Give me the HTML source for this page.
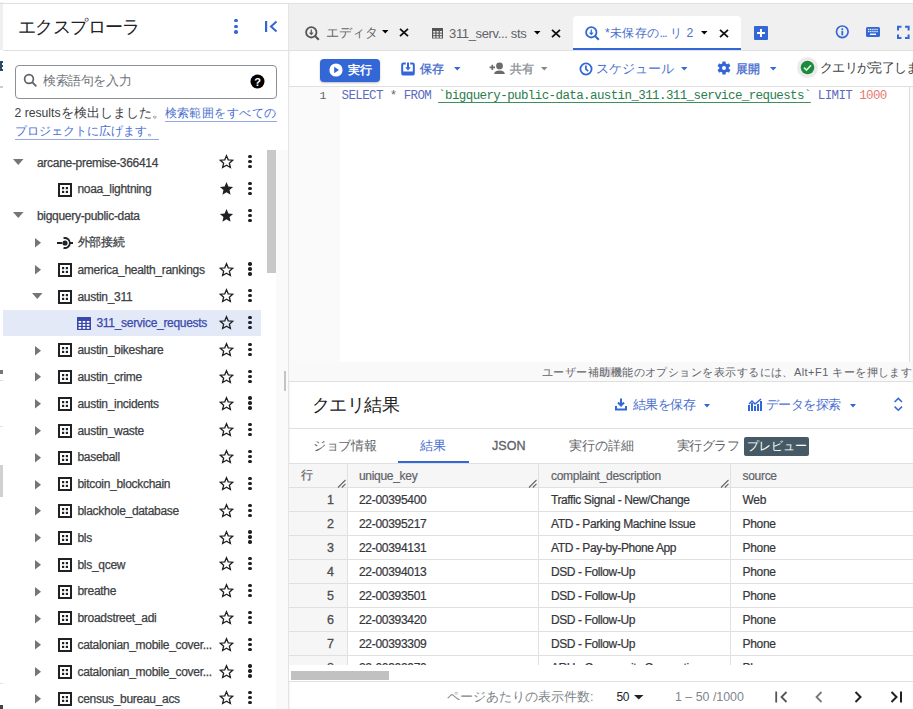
<!DOCTYPE html>
<html lang="ja"><head><meta charset="utf-8"><title>BigQuery</title>
<style>
html,body{margin:0;padding:0;width:913px;height:709px;overflow:hidden;background:#fff;font-family:'Liberation Sans', sans-serif;position:relative}
</style></head><body>
<div style="position:absolute;left:0px;top:2px;width:3px;height:48px;background:#efefef"></div>
<div style="position:absolute;left:0px;top:3px;width:913px;height:1px;background:#e0e0e0"></div>
<div style="position:absolute;left:18px;top:16.30px;line-height:23px;font-size:18px;color:#202124;font-weight:400;letter-spacing:-0.6px;font-family:'Liberation Sans', sans-serif;white-space:nowrap;">エクスプローラ</div>
<div style="position:absolute;left:234px;top:18.75px;width:3.5px;height:3.5px;background:#3367d6;border-radius:50%"></div>
<div style="position:absolute;left:234px;top:24.55px;width:3.5px;height:3.5px;background:#3367d6;border-radius:50%"></div>
<div style="position:absolute;left:234px;top:30.35px;width:3.5px;height:3.5px;background:#3367d6;border-radius:50%"></div>
<svg style="position:absolute;left:263px;top:19px;" width="16" height="15" viewBox="0 0 16 15"><rect x="2" y="2" width="2.2" height="11" fill="#3367d6"/><path d="M13.5 2.5 L8 7.5 L13.5 12.5" stroke="#3367d6" stroke-width="2" fill="none"/></svg>
<div style="position:absolute;left:3px;top:50px;width:285px;height:1px;background:#e0e0e0"></div>
<div style="position:absolute;left:0px;top:61px;width:3px;height:2px;background:#2a4a66"></div>
<div style="position:absolute;left:0px;top:65px;width:3px;height:2px;background:#2a4a66"></div>
<div style="position:absolute;left:0px;top:69px;width:3px;height:2px;background:#2a4a66"></div>
<div style="position:absolute;left:0px;top:61px;width:1.5px;height:10px;background:#2a4a66"></div>
<div style="position:absolute;left:0px;top:85.5px;width:3px;height:2.5px;background:#cdcdcd"></div>
<div style="position:absolute;left:0px;top:370px;width:2.5px;height:3.5px;background:#777"></div>
<div style="position:absolute;left:0px;top:380px;width:3px;height:1px;background:#ddd"></div>
<div style="position:absolute;left:0px;top:426px;width:3px;height:1px;background:#e3e3e3"></div>
<div style="position:absolute;left:0px;top:464.5px;width:3px;height:32.5px;background:#d0d0d0"></div>
<div style="position:absolute;left:0px;top:683px;width:3px;height:1px;background:#e3e3e3"></div>
<div style="position:absolute;left:0px;top:705px;width:3px;height:4px;background:#3b4a3b"></div>
<div style="position:absolute;left:14.5px;top:65px;width:262px;height:33.5px;box-sizing:border-box;border:1px solid #8c9095;border-radius:4px"></div>
<svg style="position:absolute;left:23px;top:73px;" width="15" height="15" viewBox="0 0 15 15"><circle cx="6" cy="6" r="4.4" stroke="#5f6368" stroke-width="1.7" fill="none"/><path d="M9.2 9.2 L13.3 13.3" stroke="#5f6368" stroke-width="1.9"/></svg>
<div style="position:absolute;left:43px;top:71.90px;line-height:17px;font-size:13px;color:#70757a;font-weight:400;letter-spacing:-0.4px;font-family:'Liberation Sans', sans-serif;white-space:nowrap;">検索語句を入力</div>
<svg style="position:absolute;left:250px;top:74px;" width="15" height="15" viewBox="0 0 15 15"><circle cx="7.5" cy="7.5" r="7" fill="#000"/><text x="7.5" y="11.5" font-size="11" font-weight="700" text-anchor="middle" fill="#fff" font-family="Liberation Sans">?</text></svg>
<div style="position:absolute;left:14.5px;top:105.00px;line-height:16px;font-size:12.2px;color:#3c4043;font-weight:400;letter-spacing:0px;font-family:'Liberation Sans', sans-serif;white-space:nowrap;">2 results<span style="font-size:13.2px">を検出しました。</span></div>
<div style="position:absolute;left:164.5px;top:105.00px;line-height:16px;font-size:12.4px;color:#4a6fd0;font-weight:400;letter-spacing:0.45px;font-family:'Liberation Sans', sans-serif;white-space:nowrap;"><span style="border-bottom:1px solid #93a9e3;padding-bottom:1px">検索範囲をすべての</span></div>
<div style="position:absolute;left:14.5px;top:123.00px;line-height:16px;font-size:12.4px;color:#4a6fd0;font-weight:400;letter-spacing:0px;font-family:'Liberation Sans', sans-serif;white-space:nowrap;"><span style="border-bottom:1px solid #93a9e3;padding-bottom:1px">プロジェクトに広げます。</span></div>
<div style="position:absolute;left:3px;top:309.8px;width:258px;height:26.7px;background:#e4e9f8"></div>
<svg style="position:absolute;left:13px;top:158.8px;" width="11" height="7" viewBox="0 0 11 7"><path d="M0 0 L10.5 0 L5.25 6 Z" fill="#757575"/></svg>
<div style="position:absolute;left:37.0px;top:154.50px;line-height:16px;font-size:12px;color:#3c4043;font-weight:400;letter-spacing:-0.3px;font-family:'Liberation Sans', sans-serif;white-space:nowrap;-webkit-text-stroke:0.25px #3c4043">arcane-premise-366414</div>
<svg style="position:absolute;left:218.5px;top:154.3px;" width="15" height="15" viewBox="0 0 15 15"><path transform="translate(7.5 7.6) scale(0.92) translate(-8 -8)" d="M8 1.6 L9.9 6.1 L14.7 6.5 L11.1 9.7 L12.2 14.4 L8 11.9 L3.8 14.4 L4.9 9.7 L1.3 6.5 L6.1 6.1 Z" stroke="#202124" stroke-width="1.4" fill="none" stroke-linejoin="miter"/></svg>
<div style="position:absolute;left:248.3px;top:155.10000000000002px;width:3.4px;height:3.4px;background:#202124;border-radius:50%"></div>
<div style="position:absolute;left:248.3px;top:160.10000000000002px;width:3.4px;height:3.4px;background:#202124;border-radius:50%"></div>
<div style="position:absolute;left:248.3px;top:165.10000000000002px;width:3.4px;height:3.4px;background:#202124;border-radius:50%"></div>
<svg style="position:absolute;left:58px;top:182.60000000000002px;" width="14" height="14" viewBox="0 0 14 14"><rect x="1" y="1" width="12" height="12" stroke="#202124" stroke-width="2" fill="none"/><rect x="4" y="4" width="2.2" height="2.2" fill="#202124"/><rect x="7.8" y="4" width="2.2" height="2.2" fill="#202124"/><rect x="4" y="7.8" width="2.2" height="2.2" fill="#202124"/><rect x="7.8" y="7.8" width="2.2" height="2.2" fill="#202124"/></svg>
<div style="position:absolute;left:77.5px;top:181.30px;line-height:16px;font-size:12px;color:#3c4043;font-weight:400;letter-spacing:-0.3px;font-family:'Liberation Sans', sans-serif;white-space:nowrap;-webkit-text-stroke:0.25px #3c4043">noaa_lightning</div>
<svg style="position:absolute;left:218.5px;top:181.10000000000002px;" width="15" height="15" viewBox="0 0 15 15"><path transform="translate(7.5 7.6) scale(0.9) translate(-8 -8)" d="M8 0.8 L10.1 5.6 L15.3 6.1 L11.4 9.6 L12.5 14.7 L8 12.1 L3.5 14.7 L4.6 9.6 L0.7 6.1 L5.9 5.6 Z" fill="#202124"/></svg>
<div style="position:absolute;left:248.3px;top:181.90000000000003px;width:3.4px;height:3.4px;background:#202124;border-radius:50%"></div>
<div style="position:absolute;left:248.3px;top:186.90000000000003px;width:3.4px;height:3.4px;background:#202124;border-radius:50%"></div>
<div style="position:absolute;left:248.3px;top:191.90000000000003px;width:3.4px;height:3.4px;background:#202124;border-radius:50%"></div>
<svg style="position:absolute;left:13px;top:212.4px;" width="11" height="7" viewBox="0 0 11 7"><path d="M0 0 L10.5 0 L5.25 6 Z" fill="#757575"/></svg>
<div style="position:absolute;left:37.0px;top:208.10px;line-height:16px;font-size:12px;color:#3c4043;font-weight:400;letter-spacing:-0.3px;font-family:'Liberation Sans', sans-serif;white-space:nowrap;-webkit-text-stroke:0.25px #3c4043">bigquery-public-data</div>
<svg style="position:absolute;left:218.5px;top:207.9px;" width="15" height="15" viewBox="0 0 15 15"><path transform="translate(7.5 7.6) scale(0.9) translate(-8 -8)" d="M8 0.8 L10.1 5.6 L15.3 6.1 L11.4 9.6 L12.5 14.7 L8 12.1 L3.5 14.7 L4.6 9.6 L0.7 6.1 L5.9 5.6 Z" fill="#202124"/></svg>
<div style="position:absolute;left:248.3px;top:208.70000000000002px;width:3.4px;height:3.4px;background:#202124;border-radius:50%"></div>
<div style="position:absolute;left:248.3px;top:213.70000000000002px;width:3.4px;height:3.4px;background:#202124;border-radius:50%"></div>
<div style="position:absolute;left:248.3px;top:218.70000000000002px;width:3.4px;height:3.4px;background:#202124;border-radius:50%"></div>
<svg style="position:absolute;left:35px;top:238.45000000000002px;" width="7" height="10" viewBox="0 0 7 10"><path d="M0 0 L6 4.75 L0 9.5 Z" fill="#757575"/></svg>
<svg style="position:absolute;left:57px;top:237.20000000000002px;" width="16" height="12" viewBox="0 0 16 12"><path d="M0 6 H5" stroke="#202124" stroke-width="2"/><circle cx="8" cy="6" r="2.6" fill="#202124"/><path d="M6.5 1.2 A5 5 0 1 1 6.5 10.8" stroke="#202124" stroke-width="1.8" fill="none"/><path d="M13 6 H16" stroke="#202124" stroke-width="2"/></svg>
<div style="position:absolute;left:77.5px;top:233.90px;line-height:16px;font-size:12px;color:#3c4043;font-weight:400;letter-spacing:-0.3px;font-family:'Liberation Sans', sans-serif;white-space:nowrap;-webkit-text-stroke:0.25px #3c4043">外部接続</div>
<svg style="position:absolute;left:35px;top:265.25px;" width="7" height="10" viewBox="0 0 7 10"><path d="M0 0 L6 4.75 L0 9.5 Z" fill="#757575"/></svg>
<svg style="position:absolute;left:58px;top:263.0px;" width="14" height="14" viewBox="0 0 14 14"><rect x="1" y="1" width="12" height="12" stroke="#202124" stroke-width="2" fill="none"/><rect x="4" y="4" width="2.2" height="2.2" fill="#202124"/><rect x="7.8" y="4" width="2.2" height="2.2" fill="#202124"/><rect x="4" y="7.8" width="2.2" height="2.2" fill="#202124"/><rect x="7.8" y="7.8" width="2.2" height="2.2" fill="#202124"/></svg>
<div style="position:absolute;left:77.5px;top:261.70px;line-height:16px;font-size:12px;color:#3c4043;font-weight:400;letter-spacing:-0.3px;font-family:'Liberation Sans', sans-serif;white-space:nowrap;-webkit-text-stroke:0.25px #3c4043">america_health_rankings</div>
<svg style="position:absolute;left:218.5px;top:261.5px;" width="15" height="15" viewBox="0 0 15 15"><path transform="translate(7.5 7.6) scale(0.92) translate(-8 -8)" d="M8 1.6 L9.9 6.1 L14.7 6.5 L11.1 9.7 L12.2 14.4 L8 11.9 L3.8 14.4 L4.9 9.7 L1.3 6.5 L6.1 6.1 Z" stroke="#202124" stroke-width="1.4" fill="none" stroke-linejoin="miter"/></svg>
<div style="position:absolute;left:248.3px;top:262.3px;width:3.4px;height:3.4px;background:#202124;border-radius:50%"></div>
<div style="position:absolute;left:248.3px;top:267.3px;width:3.4px;height:3.4px;background:#202124;border-radius:50%"></div>
<div style="position:absolute;left:248.3px;top:272.3px;width:3.4px;height:3.4px;background:#202124;border-radius:50%"></div>
<svg style="position:absolute;left:32px;top:292.8px;" width="11" height="7" viewBox="0 0 11 7"><path d="M0 0 L10.5 0 L5.25 6 Z" fill="#757575"/></svg>
<svg style="position:absolute;left:58px;top:289.8px;" width="14" height="14" viewBox="0 0 14 14"><rect x="1" y="1" width="12" height="12" stroke="#202124" stroke-width="2" fill="none"/><rect x="4" y="4" width="2.2" height="2.2" fill="#202124"/><rect x="7.8" y="4" width="2.2" height="2.2" fill="#202124"/><rect x="4" y="7.8" width="2.2" height="2.2" fill="#202124"/><rect x="7.8" y="7.8" width="2.2" height="2.2" fill="#202124"/></svg>
<div style="position:absolute;left:77.5px;top:288.50px;line-height:16px;font-size:12px;color:#3c4043;font-weight:400;letter-spacing:-0.3px;font-family:'Liberation Sans', sans-serif;white-space:nowrap;-webkit-text-stroke:0.25px #3c4043">austin_311</div>
<svg style="position:absolute;left:218.5px;top:288.3px;" width="15" height="15" viewBox="0 0 15 15"><path transform="translate(7.5 7.6) scale(0.92) translate(-8 -8)" d="M8 1.6 L9.9 6.1 L14.7 6.5 L11.1 9.7 L12.2 14.4 L8 11.9 L3.8 14.4 L4.9 9.7 L1.3 6.5 L6.1 6.1 Z" stroke="#202124" stroke-width="1.4" fill="none" stroke-linejoin="miter"/></svg>
<div style="position:absolute;left:248.3px;top:289.1px;width:3.4px;height:3.4px;background:#202124;border-radius:50%"></div>
<div style="position:absolute;left:248.3px;top:294.1px;width:3.4px;height:3.4px;background:#202124;border-radius:50%"></div>
<div style="position:absolute;left:248.3px;top:299.1px;width:3.4px;height:3.4px;background:#202124;border-radius:50%"></div>
<svg style="position:absolute;left:77px;top:316.6px;" width="14" height="13" viewBox="0 0 14 13"><rect x="0" y="0" width="14" height="13" fill="#3949ab"/><rect x="1.6" y="4.0" width="2.6" height="1.8" fill="#fff"/><rect x="1.6" y="7.0" width="2.6" height="1.8" fill="#fff"/><rect x="1.6" y="10.0" width="2.6" height="1.8" fill="#fff"/><rect x="5.7" y="4.0" width="2.6" height="1.8" fill="#fff"/><rect x="5.7" y="7.0" width="2.6" height="1.8" fill="#fff"/><rect x="5.7" y="10.0" width="2.6" height="1.8" fill="#fff"/><rect x="9.8" y="4.0" width="2.6" height="1.8" fill="#fff"/><rect x="9.8" y="7.0" width="2.6" height="1.8" fill="#fff"/><rect x="9.8" y="10.0" width="2.6" height="1.8" fill="#fff"/></svg>
<div style="position:absolute;left:96.5px;top:315.30px;line-height:16px;font-size:12px;color:#3949ab;font-weight:400;letter-spacing:-0.3px;font-family:'Liberation Sans', sans-serif;white-space:nowrap;-webkit-text-stroke:0.25px #3949ab">311_service_requests</div>
<svg style="position:absolute;left:218.5px;top:315.1px;" width="15" height="15" viewBox="0 0 15 15"><path transform="translate(7.5 7.6) scale(0.92) translate(-8 -8)" d="M8 1.6 L9.9 6.1 L14.7 6.5 L11.1 9.7 L12.2 14.4 L8 11.9 L3.8 14.4 L4.9 9.7 L1.3 6.5 L6.1 6.1 Z" stroke="#202124" stroke-width="1.4" fill="none" stroke-linejoin="miter"/></svg>
<div style="position:absolute;left:248.3px;top:315.90000000000003px;width:3.4px;height:3.4px;background:#202124;border-radius:50%"></div>
<div style="position:absolute;left:248.3px;top:320.90000000000003px;width:3.4px;height:3.4px;background:#202124;border-radius:50%"></div>
<div style="position:absolute;left:248.3px;top:325.90000000000003px;width:3.4px;height:3.4px;background:#202124;border-radius:50%"></div>
<svg style="position:absolute;left:35px;top:345.65px;" width="7" height="10" viewBox="0 0 7 10"><path d="M0 0 L6 4.75 L0 9.5 Z" fill="#757575"/></svg>
<svg style="position:absolute;left:58px;top:343.4px;" width="14" height="14" viewBox="0 0 14 14"><rect x="1" y="1" width="12" height="12" stroke="#202124" stroke-width="2" fill="none"/><rect x="4" y="4" width="2.2" height="2.2" fill="#202124"/><rect x="7.8" y="4" width="2.2" height="2.2" fill="#202124"/><rect x="4" y="7.8" width="2.2" height="2.2" fill="#202124"/><rect x="7.8" y="7.8" width="2.2" height="2.2" fill="#202124"/></svg>
<div style="position:absolute;left:77.5px;top:342.10px;line-height:16px;font-size:12px;color:#3c4043;font-weight:400;letter-spacing:-0.3px;font-family:'Liberation Sans', sans-serif;white-space:nowrap;-webkit-text-stroke:0.25px #3c4043">austin_bikeshare</div>
<svg style="position:absolute;left:218.5px;top:341.9px;" width="15" height="15" viewBox="0 0 15 15"><path transform="translate(7.5 7.6) scale(0.92) translate(-8 -8)" d="M8 1.6 L9.9 6.1 L14.7 6.5 L11.1 9.7 L12.2 14.4 L8 11.9 L3.8 14.4 L4.9 9.7 L1.3 6.5 L6.1 6.1 Z" stroke="#202124" stroke-width="1.4" fill="none" stroke-linejoin="miter"/></svg>
<div style="position:absolute;left:248.3px;top:342.7px;width:3.4px;height:3.4px;background:#202124;border-radius:50%"></div>
<div style="position:absolute;left:248.3px;top:347.7px;width:3.4px;height:3.4px;background:#202124;border-radius:50%"></div>
<div style="position:absolute;left:248.3px;top:352.7px;width:3.4px;height:3.4px;background:#202124;border-radius:50%"></div>
<svg style="position:absolute;left:35px;top:372.45000000000005px;" width="7" height="10" viewBox="0 0 7 10"><path d="M0 0 L6 4.75 L0 9.5 Z" fill="#757575"/></svg>
<svg style="position:absolute;left:58px;top:370.20000000000005px;" width="14" height="14" viewBox="0 0 14 14"><rect x="1" y="1" width="12" height="12" stroke="#202124" stroke-width="2" fill="none"/><rect x="4" y="4" width="2.2" height="2.2" fill="#202124"/><rect x="7.8" y="4" width="2.2" height="2.2" fill="#202124"/><rect x="4" y="7.8" width="2.2" height="2.2" fill="#202124"/><rect x="7.8" y="7.8" width="2.2" height="2.2" fill="#202124"/></svg>
<div style="position:absolute;left:77.5px;top:368.90px;line-height:16px;font-size:12px;color:#3c4043;font-weight:400;letter-spacing:-0.3px;font-family:'Liberation Sans', sans-serif;white-space:nowrap;-webkit-text-stroke:0.25px #3c4043">austin_crime</div>
<svg style="position:absolute;left:218.5px;top:368.70000000000005px;" width="15" height="15" viewBox="0 0 15 15"><path transform="translate(7.5 7.6) scale(0.92) translate(-8 -8)" d="M8 1.6 L9.9 6.1 L14.7 6.5 L11.1 9.7 L12.2 14.4 L8 11.9 L3.8 14.4 L4.9 9.7 L1.3 6.5 L6.1 6.1 Z" stroke="#202124" stroke-width="1.4" fill="none" stroke-linejoin="miter"/></svg>
<div style="position:absolute;left:248.3px;top:369.50000000000006px;width:3.4px;height:3.4px;background:#202124;border-radius:50%"></div>
<div style="position:absolute;left:248.3px;top:374.50000000000006px;width:3.4px;height:3.4px;background:#202124;border-radius:50%"></div>
<div style="position:absolute;left:248.3px;top:379.50000000000006px;width:3.4px;height:3.4px;background:#202124;border-radius:50%"></div>
<svg style="position:absolute;left:35px;top:399.25px;" width="7" height="10" viewBox="0 0 7 10"><path d="M0 0 L6 4.75 L0 9.5 Z" fill="#757575"/></svg>
<svg style="position:absolute;left:58px;top:397.0px;" width="14" height="14" viewBox="0 0 14 14"><rect x="1" y="1" width="12" height="12" stroke="#202124" stroke-width="2" fill="none"/><rect x="4" y="4" width="2.2" height="2.2" fill="#202124"/><rect x="7.8" y="4" width="2.2" height="2.2" fill="#202124"/><rect x="4" y="7.8" width="2.2" height="2.2" fill="#202124"/><rect x="7.8" y="7.8" width="2.2" height="2.2" fill="#202124"/></svg>
<div style="position:absolute;left:77.5px;top:395.70px;line-height:16px;font-size:12px;color:#3c4043;font-weight:400;letter-spacing:-0.3px;font-family:'Liberation Sans', sans-serif;white-space:nowrap;-webkit-text-stroke:0.25px #3c4043">austin_incidents</div>
<svg style="position:absolute;left:218.5px;top:395.5px;" width="15" height="15" viewBox="0 0 15 15"><path transform="translate(7.5 7.6) scale(0.92) translate(-8 -8)" d="M8 1.6 L9.9 6.1 L14.7 6.5 L11.1 9.7 L12.2 14.4 L8 11.9 L3.8 14.4 L4.9 9.7 L1.3 6.5 L6.1 6.1 Z" stroke="#202124" stroke-width="1.4" fill="none" stroke-linejoin="miter"/></svg>
<div style="position:absolute;left:248.3px;top:396.3px;width:3.4px;height:3.4px;background:#202124;border-radius:50%"></div>
<div style="position:absolute;left:248.3px;top:401.3px;width:3.4px;height:3.4px;background:#202124;border-radius:50%"></div>
<div style="position:absolute;left:248.3px;top:406.3px;width:3.4px;height:3.4px;background:#202124;border-radius:50%"></div>
<svg style="position:absolute;left:35px;top:426.05px;" width="7" height="10" viewBox="0 0 7 10"><path d="M0 0 L6 4.75 L0 9.5 Z" fill="#757575"/></svg>
<svg style="position:absolute;left:58px;top:423.8px;" width="14" height="14" viewBox="0 0 14 14"><rect x="1" y="1" width="12" height="12" stroke="#202124" stroke-width="2" fill="none"/><rect x="4" y="4" width="2.2" height="2.2" fill="#202124"/><rect x="7.8" y="4" width="2.2" height="2.2" fill="#202124"/><rect x="4" y="7.8" width="2.2" height="2.2" fill="#202124"/><rect x="7.8" y="7.8" width="2.2" height="2.2" fill="#202124"/></svg>
<div style="position:absolute;left:77.5px;top:422.50px;line-height:16px;font-size:12px;color:#3c4043;font-weight:400;letter-spacing:-0.3px;font-family:'Liberation Sans', sans-serif;white-space:nowrap;-webkit-text-stroke:0.25px #3c4043">austin_waste</div>
<svg style="position:absolute;left:218.5px;top:422.3px;" width="15" height="15" viewBox="0 0 15 15"><path transform="translate(7.5 7.6) scale(0.92) translate(-8 -8)" d="M8 1.6 L9.9 6.1 L14.7 6.5 L11.1 9.7 L12.2 14.4 L8 11.9 L3.8 14.4 L4.9 9.7 L1.3 6.5 L6.1 6.1 Z" stroke="#202124" stroke-width="1.4" fill="none" stroke-linejoin="miter"/></svg>
<div style="position:absolute;left:248.3px;top:423.1px;width:3.4px;height:3.4px;background:#202124;border-radius:50%"></div>
<div style="position:absolute;left:248.3px;top:428.1px;width:3.4px;height:3.4px;background:#202124;border-radius:50%"></div>
<div style="position:absolute;left:248.3px;top:433.1px;width:3.4px;height:3.4px;background:#202124;border-radius:50%"></div>
<svg style="position:absolute;left:35px;top:452.85px;" width="7" height="10" viewBox="0 0 7 10"><path d="M0 0 L6 4.75 L0 9.5 Z" fill="#757575"/></svg>
<svg style="position:absolute;left:58px;top:450.6px;" width="14" height="14" viewBox="0 0 14 14"><rect x="1" y="1" width="12" height="12" stroke="#202124" stroke-width="2" fill="none"/><rect x="4" y="4" width="2.2" height="2.2" fill="#202124"/><rect x="7.8" y="4" width="2.2" height="2.2" fill="#202124"/><rect x="4" y="7.8" width="2.2" height="2.2" fill="#202124"/><rect x="7.8" y="7.8" width="2.2" height="2.2" fill="#202124"/></svg>
<div style="position:absolute;left:77.5px;top:449.30px;line-height:16px;font-size:12px;color:#3c4043;font-weight:400;letter-spacing:-0.3px;font-family:'Liberation Sans', sans-serif;white-space:nowrap;-webkit-text-stroke:0.25px #3c4043">baseball</div>
<svg style="position:absolute;left:218.5px;top:449.1px;" width="15" height="15" viewBox="0 0 15 15"><path transform="translate(7.5 7.6) scale(0.92) translate(-8 -8)" d="M8 1.6 L9.9 6.1 L14.7 6.5 L11.1 9.7 L12.2 14.4 L8 11.9 L3.8 14.4 L4.9 9.7 L1.3 6.5 L6.1 6.1 Z" stroke="#202124" stroke-width="1.4" fill="none" stroke-linejoin="miter"/></svg>
<div style="position:absolute;left:248.3px;top:449.90000000000003px;width:3.4px;height:3.4px;background:#202124;border-radius:50%"></div>
<div style="position:absolute;left:248.3px;top:454.90000000000003px;width:3.4px;height:3.4px;background:#202124;border-radius:50%"></div>
<div style="position:absolute;left:248.3px;top:459.90000000000003px;width:3.4px;height:3.4px;background:#202124;border-radius:50%"></div>
<svg style="position:absolute;left:35px;top:479.65000000000003px;" width="7" height="10" viewBox="0 0 7 10"><path d="M0 0 L6 4.75 L0 9.5 Z" fill="#757575"/></svg>
<svg style="position:absolute;left:58px;top:477.40000000000003px;" width="14" height="14" viewBox="0 0 14 14"><rect x="1" y="1" width="12" height="12" stroke="#202124" stroke-width="2" fill="none"/><rect x="4" y="4" width="2.2" height="2.2" fill="#202124"/><rect x="7.8" y="4" width="2.2" height="2.2" fill="#202124"/><rect x="4" y="7.8" width="2.2" height="2.2" fill="#202124"/><rect x="7.8" y="7.8" width="2.2" height="2.2" fill="#202124"/></svg>
<div style="position:absolute;left:77.5px;top:476.10px;line-height:16px;font-size:12px;color:#3c4043;font-weight:400;letter-spacing:-0.3px;font-family:'Liberation Sans', sans-serif;white-space:nowrap;-webkit-text-stroke:0.25px #3c4043">bitcoin_blockchain</div>
<svg style="position:absolute;left:218.5px;top:475.90000000000003px;" width="15" height="15" viewBox="0 0 15 15"><path transform="translate(7.5 7.6) scale(0.92) translate(-8 -8)" d="M8 1.6 L9.9 6.1 L14.7 6.5 L11.1 9.7 L12.2 14.4 L8 11.9 L3.8 14.4 L4.9 9.7 L1.3 6.5 L6.1 6.1 Z" stroke="#202124" stroke-width="1.4" fill="none" stroke-linejoin="miter"/></svg>
<div style="position:absolute;left:248.3px;top:476.70000000000005px;width:3.4px;height:3.4px;background:#202124;border-radius:50%"></div>
<div style="position:absolute;left:248.3px;top:481.70000000000005px;width:3.4px;height:3.4px;background:#202124;border-radius:50%"></div>
<div style="position:absolute;left:248.3px;top:486.70000000000005px;width:3.4px;height:3.4px;background:#202124;border-radius:50%"></div>
<svg style="position:absolute;left:35px;top:506.45000000000005px;" width="7" height="10" viewBox="0 0 7 10"><path d="M0 0 L6 4.75 L0 9.5 Z" fill="#757575"/></svg>
<svg style="position:absolute;left:58px;top:504.20000000000005px;" width="14" height="14" viewBox="0 0 14 14"><rect x="1" y="1" width="12" height="12" stroke="#202124" stroke-width="2" fill="none"/><rect x="4" y="4" width="2.2" height="2.2" fill="#202124"/><rect x="7.8" y="4" width="2.2" height="2.2" fill="#202124"/><rect x="4" y="7.8" width="2.2" height="2.2" fill="#202124"/><rect x="7.8" y="7.8" width="2.2" height="2.2" fill="#202124"/></svg>
<div style="position:absolute;left:77.5px;top:502.90px;line-height:16px;font-size:12px;color:#3c4043;font-weight:400;letter-spacing:-0.3px;font-family:'Liberation Sans', sans-serif;white-space:nowrap;-webkit-text-stroke:0.25px #3c4043">blackhole_database</div>
<svg style="position:absolute;left:218.5px;top:502.70000000000005px;" width="15" height="15" viewBox="0 0 15 15"><path transform="translate(7.5 7.6) scale(0.92) translate(-8 -8)" d="M8 1.6 L9.9 6.1 L14.7 6.5 L11.1 9.7 L12.2 14.4 L8 11.9 L3.8 14.4 L4.9 9.7 L1.3 6.5 L6.1 6.1 Z" stroke="#202124" stroke-width="1.4" fill="none" stroke-linejoin="miter"/></svg>
<div style="position:absolute;left:248.3px;top:503.50000000000006px;width:3.4px;height:3.4px;background:#202124;border-radius:50%"></div>
<div style="position:absolute;left:248.3px;top:508.50000000000006px;width:3.4px;height:3.4px;background:#202124;border-radius:50%"></div>
<div style="position:absolute;left:248.3px;top:513.5px;width:3.4px;height:3.4px;background:#202124;border-radius:50%"></div>
<svg style="position:absolute;left:35px;top:533.25px;" width="7" height="10" viewBox="0 0 7 10"><path d="M0 0 L6 4.75 L0 9.5 Z" fill="#757575"/></svg>
<svg style="position:absolute;left:58px;top:531.0px;" width="14" height="14" viewBox="0 0 14 14"><rect x="1" y="1" width="12" height="12" stroke="#202124" stroke-width="2" fill="none"/><rect x="4" y="4" width="2.2" height="2.2" fill="#202124"/><rect x="7.8" y="4" width="2.2" height="2.2" fill="#202124"/><rect x="4" y="7.8" width="2.2" height="2.2" fill="#202124"/><rect x="7.8" y="7.8" width="2.2" height="2.2" fill="#202124"/></svg>
<div style="position:absolute;left:77.5px;top:529.70px;line-height:16px;font-size:12px;color:#3c4043;font-weight:400;letter-spacing:-0.3px;font-family:'Liberation Sans', sans-serif;white-space:nowrap;-webkit-text-stroke:0.25px #3c4043">bls</div>
<svg style="position:absolute;left:218.5px;top:529.5px;" width="15" height="15" viewBox="0 0 15 15"><path transform="translate(7.5 7.6) scale(0.92) translate(-8 -8)" d="M8 1.6 L9.9 6.1 L14.7 6.5 L11.1 9.7 L12.2 14.4 L8 11.9 L3.8 14.4 L4.9 9.7 L1.3 6.5 L6.1 6.1 Z" stroke="#202124" stroke-width="1.4" fill="none" stroke-linejoin="miter"/></svg>
<div style="position:absolute;left:248.3px;top:530.3px;width:3.4px;height:3.4px;background:#202124;border-radius:50%"></div>
<div style="position:absolute;left:248.3px;top:535.3px;width:3.4px;height:3.4px;background:#202124;border-radius:50%"></div>
<div style="position:absolute;left:248.3px;top:540.3px;width:3.4px;height:3.4px;background:#202124;border-radius:50%"></div>
<svg style="position:absolute;left:35px;top:560.05px;" width="7" height="10" viewBox="0 0 7 10"><path d="M0 0 L6 4.75 L0 9.5 Z" fill="#757575"/></svg>
<svg style="position:absolute;left:58px;top:557.8px;" width="14" height="14" viewBox="0 0 14 14"><rect x="1" y="1" width="12" height="12" stroke="#202124" stroke-width="2" fill="none"/><rect x="4" y="4" width="2.2" height="2.2" fill="#202124"/><rect x="7.8" y="4" width="2.2" height="2.2" fill="#202124"/><rect x="4" y="7.8" width="2.2" height="2.2" fill="#202124"/><rect x="7.8" y="7.8" width="2.2" height="2.2" fill="#202124"/></svg>
<div style="position:absolute;left:77.5px;top:556.50px;line-height:16px;font-size:12px;color:#3c4043;font-weight:400;letter-spacing:-0.3px;font-family:'Liberation Sans', sans-serif;white-space:nowrap;-webkit-text-stroke:0.25px #3c4043">bls_qcew</div>
<svg style="position:absolute;left:218.5px;top:556.3px;" width="15" height="15" viewBox="0 0 15 15"><path transform="translate(7.5 7.6) scale(0.92) translate(-8 -8)" d="M8 1.6 L9.9 6.1 L14.7 6.5 L11.1 9.7 L12.2 14.4 L8 11.9 L3.8 14.4 L4.9 9.7 L1.3 6.5 L6.1 6.1 Z" stroke="#202124" stroke-width="1.4" fill="none" stroke-linejoin="miter"/></svg>
<div style="position:absolute;left:248.3px;top:557.0999999999999px;width:3.4px;height:3.4px;background:#202124;border-radius:50%"></div>
<div style="position:absolute;left:248.3px;top:562.0999999999999px;width:3.4px;height:3.4px;background:#202124;border-radius:50%"></div>
<div style="position:absolute;left:248.3px;top:567.0999999999999px;width:3.4px;height:3.4px;background:#202124;border-radius:50%"></div>
<svg style="position:absolute;left:35px;top:586.85px;" width="7" height="10" viewBox="0 0 7 10"><path d="M0 0 L6 4.75 L0 9.5 Z" fill="#757575"/></svg>
<svg style="position:absolute;left:58px;top:584.6px;" width="14" height="14" viewBox="0 0 14 14"><rect x="1" y="1" width="12" height="12" stroke="#202124" stroke-width="2" fill="none"/><rect x="4" y="4" width="2.2" height="2.2" fill="#202124"/><rect x="7.8" y="4" width="2.2" height="2.2" fill="#202124"/><rect x="4" y="7.8" width="2.2" height="2.2" fill="#202124"/><rect x="7.8" y="7.8" width="2.2" height="2.2" fill="#202124"/></svg>
<div style="position:absolute;left:77.5px;top:583.30px;line-height:16px;font-size:12px;color:#3c4043;font-weight:400;letter-spacing:-0.3px;font-family:'Liberation Sans', sans-serif;white-space:nowrap;-webkit-text-stroke:0.25px #3c4043">breathe</div>
<svg style="position:absolute;left:218.5px;top:583.1px;" width="15" height="15" viewBox="0 0 15 15"><path transform="translate(7.5 7.6) scale(0.92) translate(-8 -8)" d="M8 1.6 L9.9 6.1 L14.7 6.5 L11.1 9.7 L12.2 14.4 L8 11.9 L3.8 14.4 L4.9 9.7 L1.3 6.5 L6.1 6.1 Z" stroke="#202124" stroke-width="1.4" fill="none" stroke-linejoin="miter"/></svg>
<div style="position:absolute;left:248.3px;top:583.9px;width:3.4px;height:3.4px;background:#202124;border-radius:50%"></div>
<div style="position:absolute;left:248.3px;top:588.9px;width:3.4px;height:3.4px;background:#202124;border-radius:50%"></div>
<div style="position:absolute;left:248.3px;top:593.9px;width:3.4px;height:3.4px;background:#202124;border-radius:50%"></div>
<svg style="position:absolute;left:35px;top:613.6500000000001px;" width="7" height="10" viewBox="0 0 7 10"><path d="M0 0 L6 4.75 L0 9.5 Z" fill="#757575"/></svg>
<svg style="position:absolute;left:58px;top:611.4000000000001px;" width="14" height="14" viewBox="0 0 14 14"><rect x="1" y="1" width="12" height="12" stroke="#202124" stroke-width="2" fill="none"/><rect x="4" y="4" width="2.2" height="2.2" fill="#202124"/><rect x="7.8" y="4" width="2.2" height="2.2" fill="#202124"/><rect x="4" y="7.8" width="2.2" height="2.2" fill="#202124"/><rect x="7.8" y="7.8" width="2.2" height="2.2" fill="#202124"/></svg>
<div style="position:absolute;left:77.5px;top:610.10px;line-height:16px;font-size:12px;color:#3c4043;font-weight:400;letter-spacing:-0.3px;font-family:'Liberation Sans', sans-serif;white-space:nowrap;-webkit-text-stroke:0.25px #3c4043">broadstreet_adi</div>
<svg style="position:absolute;left:218.5px;top:609.9000000000001px;" width="15" height="15" viewBox="0 0 15 15"><path transform="translate(7.5 7.6) scale(0.92) translate(-8 -8)" d="M8 1.6 L9.9 6.1 L14.7 6.5 L11.1 9.7 L12.2 14.4 L8 11.9 L3.8 14.4 L4.9 9.7 L1.3 6.5 L6.1 6.1 Z" stroke="#202124" stroke-width="1.4" fill="none" stroke-linejoin="miter"/></svg>
<div style="position:absolute;left:248.3px;top:610.7px;width:3.4px;height:3.4px;background:#202124;border-radius:50%"></div>
<div style="position:absolute;left:248.3px;top:615.7px;width:3.4px;height:3.4px;background:#202124;border-radius:50%"></div>
<div style="position:absolute;left:248.3px;top:620.7px;width:3.4px;height:3.4px;background:#202124;border-radius:50%"></div>
<svg style="position:absolute;left:35px;top:640.45px;" width="7" height="10" viewBox="0 0 7 10"><path d="M0 0 L6 4.75 L0 9.5 Z" fill="#757575"/></svg>
<svg style="position:absolute;left:58px;top:638.2px;" width="14" height="14" viewBox="0 0 14 14"><rect x="1" y="1" width="12" height="12" stroke="#202124" stroke-width="2" fill="none"/><rect x="4" y="4" width="2.2" height="2.2" fill="#202124"/><rect x="7.8" y="4" width="2.2" height="2.2" fill="#202124"/><rect x="4" y="7.8" width="2.2" height="2.2" fill="#202124"/><rect x="7.8" y="7.8" width="2.2" height="2.2" fill="#202124"/></svg>
<div style="position:absolute;left:77.5px;top:636.90px;line-height:16px;font-size:12px;color:#3c4043;font-weight:400;letter-spacing:-0.3px;font-family:'Liberation Sans', sans-serif;white-space:nowrap;-webkit-text-stroke:0.25px #3c4043">catalonian_mobile_cover...</div>
<svg style="position:absolute;left:218.5px;top:636.7px;" width="15" height="15" viewBox="0 0 15 15"><path transform="translate(7.5 7.6) scale(0.92) translate(-8 -8)" d="M8 1.6 L9.9 6.1 L14.7 6.5 L11.1 9.7 L12.2 14.4 L8 11.9 L3.8 14.4 L4.9 9.7 L1.3 6.5 L6.1 6.1 Z" stroke="#202124" stroke-width="1.4" fill="none" stroke-linejoin="miter"/></svg>
<div style="position:absolute;left:248.3px;top:637.5px;width:3.4px;height:3.4px;background:#202124;border-radius:50%"></div>
<div style="position:absolute;left:248.3px;top:642.5px;width:3.4px;height:3.4px;background:#202124;border-radius:50%"></div>
<div style="position:absolute;left:248.3px;top:647.5px;width:3.4px;height:3.4px;background:#202124;border-radius:50%"></div>
<svg style="position:absolute;left:35px;top:667.25px;" width="7" height="10" viewBox="0 0 7 10"><path d="M0 0 L6 4.75 L0 9.5 Z" fill="#757575"/></svg>
<svg style="position:absolute;left:58px;top:665.0px;" width="14" height="14" viewBox="0 0 14 14"><rect x="1" y="1" width="12" height="12" stroke="#202124" stroke-width="2" fill="none"/><rect x="4" y="4" width="2.2" height="2.2" fill="#202124"/><rect x="7.8" y="4" width="2.2" height="2.2" fill="#202124"/><rect x="4" y="7.8" width="2.2" height="2.2" fill="#202124"/><rect x="7.8" y="7.8" width="2.2" height="2.2" fill="#202124"/></svg>
<div style="position:absolute;left:77.5px;top:663.70px;line-height:16px;font-size:12px;color:#3c4043;font-weight:400;letter-spacing:-0.3px;font-family:'Liberation Sans', sans-serif;white-space:nowrap;-webkit-text-stroke:0.25px #3c4043">catalonian_mobile_cover...</div>
<svg style="position:absolute;left:218.5px;top:663.5px;" width="15" height="15" viewBox="0 0 15 15"><path transform="translate(7.5 7.6) scale(0.92) translate(-8 -8)" d="M8 1.6 L9.9 6.1 L14.7 6.5 L11.1 9.7 L12.2 14.4 L8 11.9 L3.8 14.4 L4.9 9.7 L1.3 6.5 L6.1 6.1 Z" stroke="#202124" stroke-width="1.4" fill="none" stroke-linejoin="miter"/></svg>
<div style="position:absolute;left:248.3px;top:664.3px;width:3.4px;height:3.4px;background:#202124;border-radius:50%"></div>
<div style="position:absolute;left:248.3px;top:669.3px;width:3.4px;height:3.4px;background:#202124;border-radius:50%"></div>
<div style="position:absolute;left:248.3px;top:674.3px;width:3.4px;height:3.4px;background:#202124;border-radius:50%"></div>
<svg style="position:absolute;left:35px;top:694.05px;" width="7" height="10" viewBox="0 0 7 10"><path d="M0 0 L6 4.75 L0 9.5 Z" fill="#757575"/></svg>
<svg style="position:absolute;left:58px;top:691.8px;" width="14" height="14" viewBox="0 0 14 14"><rect x="1" y="1" width="12" height="12" stroke="#202124" stroke-width="2" fill="none"/><rect x="4" y="4" width="2.2" height="2.2" fill="#202124"/><rect x="7.8" y="4" width="2.2" height="2.2" fill="#202124"/><rect x="4" y="7.8" width="2.2" height="2.2" fill="#202124"/><rect x="7.8" y="7.8" width="2.2" height="2.2" fill="#202124"/></svg>
<div style="position:absolute;left:77.5px;top:690.50px;line-height:16px;font-size:12px;color:#3c4043;font-weight:400;letter-spacing:-0.3px;font-family:'Liberation Sans', sans-serif;white-space:nowrap;-webkit-text-stroke:0.25px #3c4043">census_bureau_acs</div>
<svg style="position:absolute;left:218.5px;top:690.3px;" width="15" height="15" viewBox="0 0 15 15"><path transform="translate(7.5 7.6) scale(0.92) translate(-8 -8)" d="M8 1.6 L9.9 6.1 L14.7 6.5 L11.1 9.7 L12.2 14.4 L8 11.9 L3.8 14.4 L4.9 9.7 L1.3 6.5 L6.1 6.1 Z" stroke="#202124" stroke-width="1.4" fill="none" stroke-linejoin="miter"/></svg>
<div style="position:absolute;left:248.3px;top:691.0999999999999px;width:3.4px;height:3.4px;background:#202124;border-radius:50%"></div>
<div style="position:absolute;left:248.3px;top:696.0999999999999px;width:3.4px;height:3.4px;background:#202124;border-radius:50%"></div>
<div style="position:absolute;left:248.3px;top:701.0999999999999px;width:3.4px;height:3.4px;background:#202124;border-radius:50%"></div>
<div style="position:absolute;left:276px;top:150px;width:12px;height:559px;background:#fafafa"></div>
<div style="position:absolute;left:267px;top:150px;width:9px;height:123px;background:#c8c8c8"></div>
<div style="position:absolute;left:288px;top:4px;width:625px;height:46px;background:#f0f0f0"></div>
<div style="position:absolute;left:288px;top:4px;width:1px;height:705px;background:#e4e4e4"></div>
<div style="position:absolute;left:289px;top:51px;width:2px;height:658px;background:linear-gradient(90deg,rgba(0,0,0,.05),rgba(0,0,0,0))"></div>
<div style="position:absolute;left:288px;top:50px;width:625px;height:1px;background:#e0e0e0"></div>
<svg style="position:absolute;left:305px;top:26px;" width="15" height="15" viewBox="0 0 15 15"><circle cx="6.3" cy="6.3" r="5.2" stroke="#555" stroke-width="1.8" fill="none"/><path d="M10 10 L13.8 13.8" stroke="#555" stroke-width="2"/><path d="M6.3 3.5 V8 M4.6 6.6 L6.3 8.3 L8 6.6" stroke="#555" stroke-width="1.2" fill="none"/></svg>
<div style="position:absolute;left:326px;top:24.50px;line-height:16px;font-size:12.5px;color:#5f6368;font-weight:400;letter-spacing:0px;font-family:'Liberation Sans', sans-serif;white-space:nowrap;">エディタ</div>
<svg style="position:absolute;left:382px;top:30px;" width="7" height="4" viewBox="0 0 7 4"><path d="M0 0 H6.5 L3.25 3.5 Z" fill="#000"/></svg>
<svg style="position:absolute;left:399px;top:28px;" width="10" height="9" viewBox="0 0 10 9"><path d="M1 0.8 L9 8.2 M9 0.8 L1 8.2" stroke="#111" stroke-width="1.8"/></svg>
<svg style="position:absolute;left:432px;top:28px;" width="11" height="11" viewBox="0 0 11 11"><rect x="0" y="0" width="11" height="10.5" fill="#555"/><rect x="1.2" y="3.0" width="2.1" height="1.6" fill="#f0f0f0"/><rect x="1.2" y="5.6" width="2.1" height="1.6" fill="#f0f0f0"/><rect x="1.2" y="8.2" width="2.1" height="1.6" fill="#f0f0f0"/><rect x="4.5" y="3.0" width="2.1" height="1.6" fill="#f0f0f0"/><rect x="4.5" y="5.6" width="2.1" height="1.6" fill="#f0f0f0"/><rect x="4.5" y="8.2" width="2.1" height="1.6" fill="#f0f0f0"/><rect x="7.8" y="3.0" width="2.1" height="1.6" fill="#f0f0f0"/><rect x="7.8" y="5.6" width="2.1" height="1.6" fill="#f0f0f0"/><rect x="7.8" y="8.2" width="2.1" height="1.6" fill="#f0f0f0"/></svg>
<div style="position:absolute;left:449px;top:24.50px;line-height:17px;font-size:13px;color:#5f6368;font-weight:400;letter-spacing:-0.35px;font-family:'Liberation Sans', sans-serif;white-space:nowrap;">311_serv... sts</div>
<svg style="position:absolute;left:534px;top:31px;" width="7" height="4" viewBox="0 0 7 4"><path d="M0 0 H6.5 L3.25 3.5 Z" fill="#000"/></svg>
<svg style="position:absolute;left:551px;top:28.5px;" width="10" height="9" viewBox="0 0 10 9"><path d="M1 0.8 L9 8.2 M9 0.8 L1 8.2" stroke="#111" stroke-width="1.8"/></svg>
<div style="position:absolute;left:573px;top:16px;width:168px;height:34px;background:#fff;border-radius:4px 4px 0 0"></div>
<div style="position:absolute;left:573px;top:47.7px;width:168px;height:2.5px;background:#3367d6"></div>
<svg style="position:absolute;left:585px;top:26px;" width="15" height="15" viewBox="0 0 15 15"><circle cx="6.3" cy="6.3" r="5.2" stroke="#3367d6" stroke-width="1.8" fill="none"/><path d="M10 10 L13.8 13.8" stroke="#3367d6" stroke-width="2"/><path d="M6.3 3.5 V8 M4.6 6.6 L6.3 8.3 L8 6.6" stroke="#3367d6" stroke-width="1.2" fill="none"/></svg>
<div style="position:absolute;left:605px;top:25.00px;line-height:16px;font-size:12.2px;color:#4a6fd0;font-weight:400;letter-spacing:0.35px;font-family:'Liberation Sans', sans-serif;white-space:nowrap;">*未保存の<span style="letter-spacing:-1px">...</span>&nbsp;リ 2</div>
<svg style="position:absolute;left:701px;top:31px;" width="7" height="4" viewBox="0 0 7 4"><path d="M0 0 H6.5 L3.25 3.5 Z" fill="#000"/></svg>
<svg style="position:absolute;left:718.5px;top:28.5px;" width="10" height="9" viewBox="0 0 10 9"><path d="M1 0.8 L9 8.2 M9 0.8 L1 8.2" stroke="#111" stroke-width="1.8"/></svg>
<div style="position:absolute;left:754px;top:26px;width:14px;height:14px;background:#3367d6;border-radius:1px"></div>
<div style="position:absolute;left:756.8px;top:31.8px;width:8.2px;height:2px;background:#fff"></div>
<div style="position:absolute;left:759.9px;top:28.7px;width:2px;height:8.2px;background:#fff"></div>
<svg style="position:absolute;left:835px;top:25px;" width="15" height="15" viewBox="0 0 15 15"><circle cx="7.3" cy="6.8" r="5.8" stroke="#3367d6" stroke-width="1.7" fill="none"/><rect x="6.4" y="5.9" width="1.8" height="4.4" fill="#3367d6"/><rect x="6.4" y="3.3" width="1.8" height="1.8" fill="#3367d6"/></svg>
<svg style="position:absolute;left:866px;top:27px;" width="14" height="10" viewBox="0 0 14 10"><rect x="0" y="0" width="14" height="10" rx="1.5" fill="#3367d6"/><rect x="2.1" y="1.8" width="1.2" height="1.3" fill="#fff"/><rect x="2.1" y="3.9" width="1.2" height="1.3" fill="#fff"/><rect x="4.2" y="1.8" width="1.2" height="1.3" fill="#fff"/><rect x="4.2" y="3.9" width="1.2" height="1.3" fill="#fff"/><rect x="6.3" y="1.8" width="1.2" height="1.3" fill="#fff"/><rect x="6.3" y="3.9" width="1.2" height="1.3" fill="#fff"/><rect x="8.4" y="1.8" width="1.2" height="1.3" fill="#fff"/><rect x="8.4" y="3.9" width="1.2" height="1.3" fill="#fff"/><rect x="10.5" y="1.8" width="1.2" height="1.3" fill="#fff"/><rect x="10.5" y="3.9" width="1.2" height="1.3" fill="#fff"/><rect x="4" y="6.6" width="6" height="1.4" fill="#fff"/></svg>
<svg style="position:absolute;left:896px;top:24.5px;" width="15" height="15" viewBox="0 0 15 15"><path d="M2 5.5 V1.8 H5.5 M9 1.8 H12.6 V5.5 M12.6 9.5 V13 H9 M5.5 13 H2 V9.5" stroke="#3367d6" stroke-width="2" fill="none"/></svg>
<div style="position:absolute;left:289px;top:86px;width:624px;height:1px;background:#e0e0e0"></div>
<div style="position:absolute;left:320px;top:59px;width:60px;height:23px;background:#3367d6;border-radius:4px;box-shadow:0 1px 2px rgba(0,0,0,.25)"></div>
<svg style="position:absolute;left:329px;top:62.5px;" width="14" height="14" viewBox="0 0 14 14"><circle cx="7" cy="7" r="6.6" fill="#fff"/><path d="M5.2 3.8 L10 7 L5.2 10.2 Z" fill="#3367d6"/></svg>
<div style="position:absolute;left:348px;top:61.60px;line-height:16px;font-size:12px;color:#fff;font-weight:700;letter-spacing:0px;font-family:'Liberation Sans', sans-serif;white-space:nowrap;">実行</div>
<svg style="position:absolute;left:401px;top:61.5px;" width="14" height="14" viewBox="0 0 14 14"><path d="M4.8 1.4 H2.4 Q1.2 1.4 1.2 2.6 V11.4 Q1.2 12.6 2.4 12.6 H11.6 Q12.8 12.6 12.8 11.4 V2.6 Q12.8 1.4 11.6 1.4 H9.2" stroke="#3367d6" stroke-width="2" fill="none"/><rect x="1.2" y="9.5" width="11.6" height="3" fill="#3367d6"/><path d="M7 0.5 V6" stroke="#3367d6" stroke-width="2"/><path d="M4.2 5.2 H9.8 L7 8.5 Z" fill="#3367d6"/></svg>
<div style="position:absolute;left:420px;top:61.00px;line-height:16px;font-size:12px;color:#4a6fd0;font-weight:400;letter-spacing:0px;font-family:'Liberation Sans', sans-serif;white-space:nowrap;-webkit-text-stroke:0.35px #4a6fd0">保存</div>
<svg style="position:absolute;left:453.5px;top:66.5px;" width="7" height="4" viewBox="0 0 7 4"><path d="M0 0 H6.5 L3.25 3.5 Z" fill="#3367d6"/></svg>
<svg style="position:absolute;left:488px;top:60px;" width="18" height="15" viewBox="0 0 18 15"><path d="M1.6 7.4 H7 M4.3 4.7 V10.1" stroke="#6b6b6b" stroke-width="1.6"/><circle cx="11.5" cy="5.9" r="3.4" fill="#6b6b6b"/><path d="M6.2 14 Q6.2 10.4 11.5 10.4 Q16.8 10.4 16.8 14 Z" fill="#6b6b6b"/></svg>
<div style="position:absolute;left:509.5px;top:61.00px;line-height:16px;font-size:12px;color:#8d9196;font-weight:400;letter-spacing:0px;font-family:'Liberation Sans', sans-serif;white-space:nowrap;-webkit-text-stroke:0.35px #8d9196">共有</div>
<svg style="position:absolute;left:541px;top:66.5px;" width="7" height="4" viewBox="0 0 7 4"><path d="M0 0 H6.5 L3.25 3.5 Z" fill="#80868b"/></svg>
<svg style="position:absolute;left:578.5px;top:61.5px;" width="14" height="14" viewBox="0 0 14 14"><circle cx="7" cy="7" r="5.6" stroke="#3367d6" stroke-width="1.8" fill="none"/><path d="M6.9 3.6 V7.2 L9.2 9.2" stroke="#3367d6" stroke-width="1.7" fill="none"/></svg>
<div style="position:absolute;left:595.5px;top:61.00px;line-height:16px;font-size:12.5px;color:#4a6fd0;font-weight:400;letter-spacing:0px;font-family:'Liberation Sans', sans-serif;white-space:nowrap;">スケジュール</div>
<svg style="position:absolute;left:681px;top:66.5px;" width="7" height="4" viewBox="0 0 7 4"><path d="M0 0 H6.5 L3.25 3.5 Z" fill="#3367d6"/></svg>
<svg style="position:absolute;left:717.3px;top:61.3px;" width="14" height="14" viewBox="0 0 14 14"><circle cx="7" cy="7" r="4.8" fill="#3367d6"/><rect x="5.3" y="0.4" width="3.4" height="3.2" rx="0.6" fill="#3367d6" transform="rotate(0 7 7)"/><rect x="5.3" y="0.4" width="3.4" height="3.2" rx="0.6" fill="#3367d6" transform="rotate(60 7 7)"/><rect x="5.3" y="0.4" width="3.4" height="3.2" rx="0.6" fill="#3367d6" transform="rotate(120 7 7)"/><rect x="5.3" y="0.4" width="3.4" height="3.2" rx="0.6" fill="#3367d6" transform="rotate(180 7 7)"/><rect x="5.3" y="0.4" width="3.4" height="3.2" rx="0.6" fill="#3367d6" transform="rotate(240 7 7)"/><rect x="5.3" y="0.4" width="3.4" height="3.2" rx="0.6" fill="#3367d6" transform="rotate(300 7 7)"/><circle cx="7" cy="7" r="2" fill="#fff"/></svg>
<div style="position:absolute;left:735.5px;top:61.00px;line-height:16px;font-size:12px;color:#4a6fd0;font-weight:400;letter-spacing:0px;font-family:'Liberation Sans', sans-serif;white-space:nowrap;-webkit-text-stroke:0.35px #4a6fd0">展開</div>
<svg style="position:absolute;left:769.5px;top:66.5px;" width="7" height="4" viewBox="0 0 7 4"><path d="M0 0 H6.5 L3.25 3.5 Z" fill="#3367d6"/></svg>
<div style="position:absolute;left:797.3px;top:57px;width:21px;height:21px;background:#ebebeb;border-radius:50%"></div>
<svg style="position:absolute;left:800.3px;top:60px;" width="15" height="15" viewBox="0 0 15 15"><circle cx="7.5" cy="7.5" r="6.8" fill="#1e8a3e"/><path d="M4 7.6 L6.5 10 L11 5.2" stroke="#d8f5df" stroke-width="1.6" fill="none"/></svg>
<div style="position:absolute;left:820px;top:58.70px;line-height:17px;font-size:13px;color:#3c4043;font-weight:400;letter-spacing:-0.7px;font-family:'Liberation Sans', sans-serif;white-space:nowrap;">クエリが完了しました</div>
<div style="position:absolute;left:289px;top:87px;width:51px;height:275px;background:#fafafa"></div>
<div style="position:absolute;left:909px;top:87px;width:1px;height:275px;background:#ddd"></div>
<div style="position:absolute;left:910px;top:87px;width:3px;height:275px;background:#fbfbfb"></div>
<div style="position:absolute;left:319.5px;top:87.50px;line-height:15px;font-size:11.5px;color:#5f6368;font-weight:400;letter-spacing:0px;font-family:'Liberation Mono', monospace;white-space:nowrap;">1</div>
<div style="position:absolute;left:341.5px;top:88.30px;line-height:16px;font-size:12.5px;color:#202124;font-weight:400;letter-spacing:-0.6px;font-family:'Liberation Mono', monospace;white-space:nowrap;"><span style="color:#5c6bc0">SELECT</span> <span style="color:#5f6368">*</span> <span style="color:#5c6bc0">FROM</span> <span style="color:#2a7d4c;text-decoration:underline;text-decoration-color:#3f8f5a;text-underline-offset:2.5px">`bigquery-public-data.austin_311.311_service_requests`</span> <span style="color:#5c6bc0">LIMIT</span> <span style="color:#e67c73">1000</span></div>
<div style="position:absolute;left:289px;top:362px;width:624px;height:19px;background:#f9f9f9"></div>
<div style="position:absolute;left:283.5px;top:371px;width:2px;height:20px;background:#c4c4c4"></div>
<div style="position:absolute;left:600px;top:367px;width:20px;height:10px;background:#dcdcdc"></div>
<div style="position:absolute;left:542px;top:364.50px;line-height:14px;font-size:11px;color:#5f6368;font-weight:400;letter-spacing:0.45px;font-family:'Liberation Sans', sans-serif;white-space:nowrap;">ユーザー補助機能のオプションを表示するには、Alt+F1 キーを押します。</div>
<div style="position:absolute;left:289px;top:381px;width:624px;height:1px;background:#e0e0e0"></div>
<div style="position:absolute;left:312px;top:393.50px;line-height:23px;font-size:18px;color:#202124;font-weight:400;letter-spacing:-0.6px;font-family:'Liberation Sans', sans-serif;white-space:nowrap;">クエリ結果</div>
<svg style="position:absolute;left:614.5px;top:398px;" width="12" height="13" viewBox="0 0 12 13"><path d="M6 0.5 V7 M3 4.5 L6 7.5 L9 4.5" stroke="#3367d6" stroke-width="2" fill="none"/><path d="M1 8 V11.5 H11 V8" stroke="#3367d6" stroke-width="2" fill="none"/></svg>
<div style="position:absolute;left:632.5px;top:396.30px;line-height:17px;font-size:13px;color:#4a6fd0;font-weight:400;letter-spacing:-0.5px;font-family:'Liberation Sans', sans-serif;white-space:nowrap;">結果を保存</div>
<svg style="position:absolute;left:704px;top:403.5px;" width="7" height="4" viewBox="0 0 7 4"><path d="M0 0 H6 L3 3.5 Z" fill="#3367d6"/></svg>
<svg style="position:absolute;left:748px;top:398px;" width="15" height="14" viewBox="0 0 15 14"><path d="M1 13 V7 M4 13 V5 M7 13 V8 M10 13 V6 M13 13 V3" stroke="#3367d6" stroke-width="2"/><path d="M1 6 L4 3 L7 6 L13 1" stroke="#3367d6" stroke-width="1.5" fill="none"/></svg>
<div style="position:absolute;left:765.5px;top:396.30px;line-height:17px;font-size:13px;color:#4a6fd0;font-weight:400;letter-spacing:-0.5px;font-family:'Liberation Sans', sans-serif;white-space:nowrap;">データを探索</div>
<svg style="position:absolute;left:849.5px;top:403.5px;" width="7" height="4" viewBox="0 0 7 4"><path d="M0 0 H6 L3 3.5 Z" fill="#3367d6"/></svg>
<svg style="position:absolute;left:893px;top:397px;" width="11" height="15" viewBox="0 0 11 15"><path d="M1.6 5 L5.3 1.4 L9 5 M1.6 9.6 L5.3 13.2 L9 9.6" stroke="#3367d6" stroke-width="1.5" fill="none"/></svg>
<div style="position:absolute;left:289px;top:428px;width:624px;height:1px;background:#e0e0e0"></div>
<div style="position:absolute;left:313px;top:437.00px;line-height:17px;font-size:13px;color:#5f6368;font-weight:400;letter-spacing:-0.35px;font-family:'Liberation Sans', sans-serif;white-space:nowrap;">ジョブ情報</div>
<div style="position:absolute;left:420px;top:437.50px;line-height:16px;font-size:12.5px;color:#4a6fd0;font-weight:400;letter-spacing:0px;font-family:'Liberation Sans', sans-serif;white-space:nowrap;">結果</div>
<div style="position:absolute;left:492px;top:437.50px;line-height:16px;font-size:12.5px;color:#5f6368;font-weight:400;letter-spacing:0.1px;font-family:'Liberation Sans', sans-serif;white-space:nowrap;-webkit-text-stroke:0.35px #5f6368">JSON</div>
<div style="position:absolute;left:569px;top:437.00px;line-height:17px;font-size:13px;color:#5f6368;font-weight:400;letter-spacing:0px;font-family:'Liberation Sans', sans-serif;white-space:nowrap;">実行の詳細</div>
<div style="position:absolute;left:676.5px;top:437.00px;line-height:17px;font-size:13px;color:#5f6368;font-weight:400;letter-spacing:-0.45px;font-family:'Liberation Sans', sans-serif;white-space:nowrap;">実行グラフ</div>
<div style="position:absolute;left:743.5px;top:436.5px;width:65px;height:19px;background:#455a64;border-radius:2px"></div>
<div style="position:absolute;left:747px;top:438.00px;line-height:16px;font-size:12.4px;color:#fff;font-weight:400;letter-spacing:0px;font-family:'Liberation Sans', sans-serif;white-space:nowrap;">プレビュー</div>
<div style="position:absolute;left:398px;top:460.5px;width:71px;height:2.5px;background:#3367d6"></div>
<div style="position:absolute;left:289px;top:463px;width:624px;height:1px;background:#e0e0e0"></div>
<div style="position:absolute;left:289px;top:464px;width:624px;height:23px;background:#f6f6f6"></div>
<div style="position:absolute;left:289px;top:488px;width:58px;height:177px;background:#f6f6f6"></div>
<div style="position:absolute;left:289px;top:487px;width:624px;height:1px;background:#e0e0e0"></div>
<div style="position:absolute;left:347px;top:464px;width:1px;height:201px;background:#e0e0e0"></div>
<div style="position:absolute;left:538px;top:464px;width:1px;height:201px;background:#e0e0e0"></div>
<div style="position:absolute;left:730px;top:464px;width:1px;height:201px;background:#e0e0e0"></div>
<div style="position:absolute;left:300.5px;top:467.30px;line-height:16px;font-size:12px;color:#5f6368;font-weight:400;letter-spacing:0px;font-family:'Liberation Sans', sans-serif;white-space:nowrap;-webkit-text-stroke:0.15px #5f6368">行</div>
<div style="position:absolute;left:359px;top:468.00px;line-height:16px;font-size:12px;color:#5f6368;font-weight:400;letter-spacing:-0.3px;font-family:'Liberation Sans', sans-serif;white-space:nowrap;-webkit-text-stroke:0.2px #5f6368">unique_key</div>
<div style="position:absolute;left:551px;top:468.00px;line-height:16px;font-size:12px;color:#5f6368;font-weight:400;letter-spacing:-0.3px;font-family:'Liberation Sans', sans-serif;white-space:nowrap;-webkit-text-stroke:0.2px #5f6368">complaint_description</div>
<div style="position:absolute;left:742.5px;top:468.00px;line-height:16px;font-size:12px;color:#5f6368;font-weight:400;letter-spacing:-0.3px;font-family:'Liberation Sans', sans-serif;white-space:nowrap;-webkit-text-stroke:0.2px #5f6368">source</div>
<svg style="position:absolute;left:336.5px;top:479px;" width="9" height="9" viewBox="0 0 9 9"><path d="M1 8.5 L8.5 1 M4.8 8.5 L8.5 4.8" stroke="#666" stroke-width="1.1"/></svg>
<svg style="position:absolute;left:528px;top:479px;" width="9" height="9" viewBox="0 0 9 9"><path d="M1 8.5 L8.5 1 M4.8 8.5 L8.5 4.8" stroke="#666" stroke-width="1.1"/></svg>
<svg style="position:absolute;left:720px;top:479px;" width="9" height="9" viewBox="0 0 9 9"><path d="M1 8.5 L8.5 1 M4.8 8.5 L8.5 4.8" stroke="#666" stroke-width="1.1"/></svg>
<div style="position:absolute;left:289px;top:488px;width:624px;height:177px;overflow:hidden">
<div style="position:absolute;left:0;top:23px;width:624px;height:1px;background:#e0e0e0"></div>
<div style="position:absolute;left:0;top:4px;width:45px;text-align:right;line-height:16px;font-size:12.5px;color:#4a4d51;-webkit-text-stroke:0.3px #4a4d51;font-family:'Liberation Sans', sans-serif">1</div>
<div style="position:absolute;left:70px;top:4px;line-height:16px;font-size:12px;color:#35363a;-webkit-text-stroke:0.2px #35363a;letter-spacing:-0.3px;font-family:'Liberation Sans', sans-serif;white-space:nowrap">22-00395400</div>
<div style="position:absolute;left:262px;top:4px;line-height:16px;font-size:12px;color:#35363a;-webkit-text-stroke:0.2px #35363a;letter-spacing:-0.4px;font-family:'Liberation Sans', sans-serif;white-space:nowrap">Traffic Signal - New/Change</div>
<div style="position:absolute;left:453.5px;top:4px;line-height:16px;font-size:12px;color:#35363a;-webkit-text-stroke:0.2px #35363a;letter-spacing:-0.3px;font-family:'Liberation Sans', sans-serif;white-space:nowrap">Web</div>
<div style="position:absolute;left:0;top:47px;width:624px;height:1px;background:#e0e0e0"></div>
<div style="position:absolute;left:0;top:28px;width:45px;text-align:right;line-height:16px;font-size:12.5px;color:#4a4d51;-webkit-text-stroke:0.3px #4a4d51;font-family:'Liberation Sans', sans-serif">2</div>
<div style="position:absolute;left:70px;top:28px;line-height:16px;font-size:12px;color:#35363a;-webkit-text-stroke:0.2px #35363a;letter-spacing:-0.3px;font-family:'Liberation Sans', sans-serif;white-space:nowrap">22-00395217</div>
<div style="position:absolute;left:262px;top:28px;line-height:16px;font-size:12px;color:#35363a;-webkit-text-stroke:0.2px #35363a;letter-spacing:-0.4px;font-family:'Liberation Sans', sans-serif;white-space:nowrap">ATD - Parking Machine Issue</div>
<div style="position:absolute;left:453.5px;top:28px;line-height:16px;font-size:12px;color:#35363a;-webkit-text-stroke:0.2px #35363a;letter-spacing:-0.3px;font-family:'Liberation Sans', sans-serif;white-space:nowrap">Phone</div>
<div style="position:absolute;left:0;top:71px;width:624px;height:1px;background:#e0e0e0"></div>
<div style="position:absolute;left:0;top:52px;width:45px;text-align:right;line-height:16px;font-size:12.5px;color:#4a4d51;-webkit-text-stroke:0.3px #4a4d51;font-family:'Liberation Sans', sans-serif">3</div>
<div style="position:absolute;left:70px;top:52px;line-height:16px;font-size:12px;color:#35363a;-webkit-text-stroke:0.2px #35363a;letter-spacing:-0.3px;font-family:'Liberation Sans', sans-serif;white-space:nowrap">22-00394131</div>
<div style="position:absolute;left:262px;top:52px;line-height:16px;font-size:12px;color:#35363a;-webkit-text-stroke:0.2px #35363a;letter-spacing:-0.4px;font-family:'Liberation Sans', sans-serif;white-space:nowrap">ATD - Pay-by-Phone App</div>
<div style="position:absolute;left:453.5px;top:52px;line-height:16px;font-size:12px;color:#35363a;-webkit-text-stroke:0.2px #35363a;letter-spacing:-0.3px;font-family:'Liberation Sans', sans-serif;white-space:nowrap">Phone</div>
<div style="position:absolute;left:0;top:95px;width:624px;height:1px;background:#e0e0e0"></div>
<div style="position:absolute;left:0;top:76px;width:45px;text-align:right;line-height:16px;font-size:12.5px;color:#4a4d51;-webkit-text-stroke:0.3px #4a4d51;font-family:'Liberation Sans', sans-serif">4</div>
<div style="position:absolute;left:70px;top:76px;line-height:16px;font-size:12px;color:#35363a;-webkit-text-stroke:0.2px #35363a;letter-spacing:-0.3px;font-family:'Liberation Sans', sans-serif;white-space:nowrap">22-00394013</div>
<div style="position:absolute;left:262px;top:76px;line-height:16px;font-size:12px;color:#35363a;-webkit-text-stroke:0.2px #35363a;letter-spacing:-0.4px;font-family:'Liberation Sans', sans-serif;white-space:nowrap">DSD - Follow-Up</div>
<div style="position:absolute;left:453.5px;top:76px;line-height:16px;font-size:12px;color:#35363a;-webkit-text-stroke:0.2px #35363a;letter-spacing:-0.3px;font-family:'Liberation Sans', sans-serif;white-space:nowrap">Phone</div>
<div style="position:absolute;left:0;top:119px;width:624px;height:1px;background:#e0e0e0"></div>
<div style="position:absolute;left:0;top:100px;width:45px;text-align:right;line-height:16px;font-size:12.5px;color:#4a4d51;-webkit-text-stroke:0.3px #4a4d51;font-family:'Liberation Sans', sans-serif">5</div>
<div style="position:absolute;left:70px;top:100px;line-height:16px;font-size:12px;color:#35363a;-webkit-text-stroke:0.2px #35363a;letter-spacing:-0.3px;font-family:'Liberation Sans', sans-serif;white-space:nowrap">22-00393501</div>
<div style="position:absolute;left:262px;top:100px;line-height:16px;font-size:12px;color:#35363a;-webkit-text-stroke:0.2px #35363a;letter-spacing:-0.4px;font-family:'Liberation Sans', sans-serif;white-space:nowrap">DSD - Follow-Up</div>
<div style="position:absolute;left:453.5px;top:100px;line-height:16px;font-size:12px;color:#35363a;-webkit-text-stroke:0.2px #35363a;letter-spacing:-0.3px;font-family:'Liberation Sans', sans-serif;white-space:nowrap">Phone</div>
<div style="position:absolute;left:0;top:143px;width:624px;height:1px;background:#e0e0e0"></div>
<div style="position:absolute;left:0;top:124px;width:45px;text-align:right;line-height:16px;font-size:12.5px;color:#4a4d51;-webkit-text-stroke:0.3px #4a4d51;font-family:'Liberation Sans', sans-serif">6</div>
<div style="position:absolute;left:70px;top:124px;line-height:16px;font-size:12px;color:#35363a;-webkit-text-stroke:0.2px #35363a;letter-spacing:-0.3px;font-family:'Liberation Sans', sans-serif;white-space:nowrap">22-00393420</div>
<div style="position:absolute;left:262px;top:124px;line-height:16px;font-size:12px;color:#35363a;-webkit-text-stroke:0.2px #35363a;letter-spacing:-0.4px;font-family:'Liberation Sans', sans-serif;white-space:nowrap">DSD - Follow-Up</div>
<div style="position:absolute;left:453.5px;top:124px;line-height:16px;font-size:12px;color:#35363a;-webkit-text-stroke:0.2px #35363a;letter-spacing:-0.3px;font-family:'Liberation Sans', sans-serif;white-space:nowrap">Phone</div>
<div style="position:absolute;left:0;top:167px;width:624px;height:1px;background:#e0e0e0"></div>
<div style="position:absolute;left:0;top:148px;width:45px;text-align:right;line-height:16px;font-size:12.5px;color:#4a4d51;-webkit-text-stroke:0.3px #4a4d51;font-family:'Liberation Sans', sans-serif">7</div>
<div style="position:absolute;left:70px;top:148px;line-height:16px;font-size:12px;color:#35363a;-webkit-text-stroke:0.2px #35363a;letter-spacing:-0.3px;font-family:'Liberation Sans', sans-serif;white-space:nowrap">22-00393309</div>
<div style="position:absolute;left:262px;top:148px;line-height:16px;font-size:12px;color:#35363a;-webkit-text-stroke:0.2px #35363a;letter-spacing:-0.4px;font-family:'Liberation Sans', sans-serif;white-space:nowrap">DSD - Follow-Up</div>
<div style="position:absolute;left:453.5px;top:148px;line-height:16px;font-size:12px;color:#35363a;-webkit-text-stroke:0.2px #35363a;letter-spacing:-0.3px;font-family:'Liberation Sans', sans-serif;white-space:nowrap">Phone</div>
<div style="position:absolute;left:0;top:191px;width:624px;height:1px;background:#e0e0e0"></div>
<div style="position:absolute;left:0;top:172px;width:45px;text-align:right;line-height:16px;font-size:12.5px;color:#4a4d51;-webkit-text-stroke:0.3px #4a4d51;font-family:'Liberation Sans', sans-serif">8</div>
<div style="position:absolute;left:70px;top:172px;line-height:16px;font-size:12px;color:#35363a;-webkit-text-stroke:0.2px #35363a;letter-spacing:-0.3px;font-family:'Liberation Sans', sans-serif;white-space:nowrap">22-00392970</div>
<div style="position:absolute;left:262px;top:172px;line-height:16px;font-size:12px;color:#35363a;-webkit-text-stroke:0.2px #35363a;letter-spacing:-0.4px;font-family:'Liberation Sans', sans-serif;white-space:nowrap">ARH - Community Connections</div>
<div style="position:absolute;left:453.5px;top:172px;line-height:16px;font-size:12px;color:#35363a;-webkit-text-stroke:0.2px #35363a;letter-spacing:-0.3px;font-family:'Liberation Sans', sans-serif;white-space:nowrap">Phone</div>
</div>
<div style="position:absolute;left:289px;top:665px;width:624px;height:16px;background:#fff"></div>
<div style="position:absolute;left:290.5px;top:671px;width:98px;height:9px;background:#c1c1c1"></div>
<div style="position:absolute;left:289px;top:681px;width:624px;height:1px;background:#e0e0e0"></div>
<div style="position:absolute;left:447px;top:688.50px;line-height:16px;font-size:12.6px;color:#80868b;font-weight:400;letter-spacing:0px;font-family:'Liberation Sans', sans-serif;white-space:nowrap;">ページあたりの表示件数:</div>
<div style="position:absolute;left:616.5px;top:688.50px;line-height:16px;font-size:12px;color:#202124;font-weight:400;letter-spacing:-0.3px;font-family:'Liberation Sans', sans-serif;white-space:nowrap;">50</div>
<svg style="position:absolute;left:634px;top:694.5px;" width="10" height="5" viewBox="0 0 10 5"><path d="M0 0 H9.5 L4.75 4.5 Z" fill="#202124"/></svg>
<div style="position:absolute;left:675px;top:688.50px;line-height:16px;font-size:12.4px;color:#80868b;font-weight:400;letter-spacing:0px;font-family:'Liberation Sans', sans-serif;white-space:nowrap;">1 – 50 /1000</div>
<svg style="position:absolute;left:774.5px;top:690.5px;" width="13" height="12" viewBox="0 0 13 12"><path d="M1.2 0.5 V11.5" stroke="#555" stroke-width="1.8"/><path d="M11.5 1 L6.5 6 L11.5 11" stroke="#555" stroke-width="1.8" fill="none"/></svg>
<svg style="position:absolute;left:814px;top:690.5px;" width="9" height="12" viewBox="0 0 9 12"><path d="M7.5 1 L2.5 6 L7.5 11" stroke="#777" stroke-width="1.8" fill="none"/></svg>
<svg style="position:absolute;left:853.5px;top:690.5px;" width="9" height="12" viewBox="0 0 9 12"><path d="M1.5 1 L6.5 6 L1.5 11" stroke="#202124" stroke-width="2" fill="none"/></svg>
<svg style="position:absolute;left:889.5px;top:690.5px;" width="13" height="12" viewBox="0 0 13 12"><path d="M1.5 1 L6.5 6 L1.5 11" stroke="#202124" stroke-width="2" fill="none"/><path d="M11 0.5 V11.5" stroke="#202124" stroke-width="2"/></svg>
</body></html>
